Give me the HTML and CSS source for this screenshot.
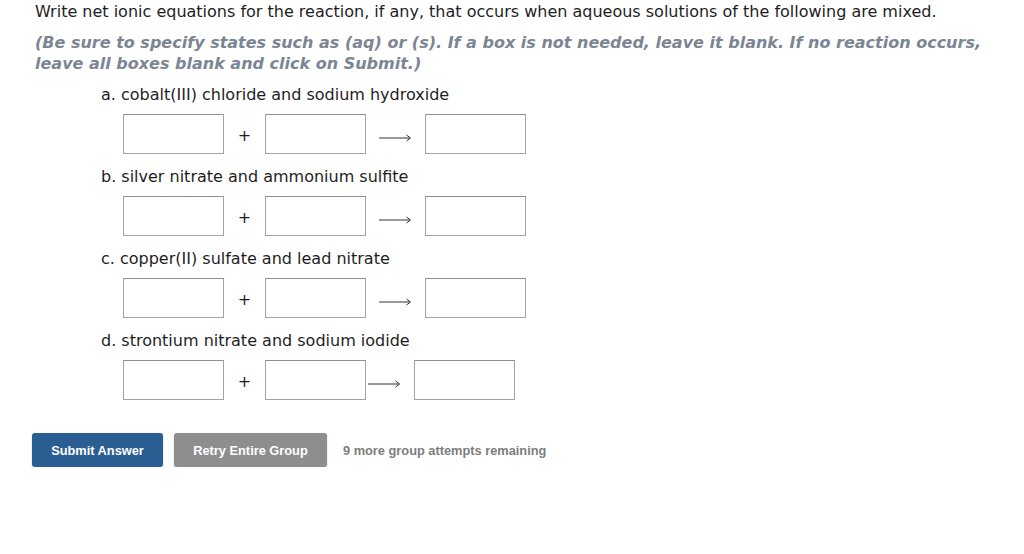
FILE: index.html
```html
<!DOCTYPE html>
<html>
<head>
<meta charset="utf-8">
<link rel="stylesheet" href="styles.css">
</head>
<body>
<div class="page">
  <p class="prompt">Write net ionic equations for the reaction, if any, that occurs when aqueous solutions of the following are mixed.</p>
  <p class="note">(Be sure to specify states such as (aq) or (s). If a box is not needed, leave it blank. If no reaction occurs, leave all boxes blank and click on Submit.)</p>

  <div class="question">
    <div class="label">a. cobalt(III) chloride and sodium hydroxide</div>
    <div class="eq">
      <span class="box"></span>
      <span class="plus">+</span>
      <span class="box"></span>
      <span class="arrow"><svg width="33" height="8" viewBox="0 0 33 8"><line x1="0" y1="4" x2="31" y2="4" stroke="#333" stroke-width="1"/><polyline points="27.5,1 31.5,4 27.5,7" fill="none" stroke="#333" stroke-width="1"/></svg></span>
      <span class="box"></span>
    </div>
  </div>

  <div class="question">
    <div class="label">b. silver nitrate and ammonium sulfite</div>
    <div class="eq">
      <span class="box"></span>
      <span class="plus">+</span>
      <span class="box"></span>
      <span class="arrow"><svg width="33" height="8" viewBox="0 0 33 8"><line x1="0" y1="4" x2="31" y2="4" stroke="#333" stroke-width="1"/><polyline points="27.5,1 31.5,4 27.5,7" fill="none" stroke="#333" stroke-width="1"/></svg></span>
      <span class="box"></span>
    </div>
  </div>

  <div class="question">
    <div class="label">c. copper(II) sulfate and lead nitrate</div>
    <div class="eq">
      <span class="box"></span>
      <span class="plus">+</span>
      <span class="box"></span>
      <span class="arrow"><svg width="33" height="8" viewBox="0 0 33 8"><line x1="0" y1="4" x2="31" y2="4" stroke="#333" stroke-width="1"/><polyline points="27.5,1 31.5,4 27.5,7" fill="none" stroke="#333" stroke-width="1"/></svg></span>
      <span class="box"></span>
    </div>
  </div>

  <div class="question">
    <div class="label">d. strontium nitrate and sodium iodide</div>
    <div class="eq">
      <span class="box"></span>
      <span class="plus">+</span>
      <span class="box"></span>
      <span class="arrow tight"><svg width="33" height="8" viewBox="0 0 33 8"><line x1="0" y1="4" x2="31" y2="4" stroke="#333" stroke-width="1"/><polyline points="27.5,1 31.5,4 27.5,7" fill="none" stroke="#333" stroke-width="1"/></svg></span>
      <span class="box"></span>
    </div>
  </div>

  <div class="actions">
    <button class="btn btn-submit">Submit Answer</button>
    <button class="btn btn-retry">Retry Entire Group</button>
    <span class="remaining">9 more group attempts remaining</span>
  </div>
</div>
</body>
</html>
```

FILE: styles.css
```css
html, body {
  margin: 0;
  padding: 0;
  background: #ffffff;
}

.page {
  padding: 1px 0 0 35px;
  font-family: "DejaVu Sans", Verdana, sans-serif;
  font-size: 16px;
  line-height: 21px;
  color: #1e1e1e;
}

.prompt {
  margin: 0;
}

.note {
  margin: 10px 0 0 0;
  width: 950px;
  font-weight: bold;
  font-style: italic;
  color: #7b8594;
}

.question {
  margin: 10px 0 0 66px;
}

.question + .question {
  margin-top: 12px;
}

.label {
  height: 21px;
}

.eq {
  display: flex;
  align-items: center;
  margin: 9px 0 0 22px;
  height: 40px;
}

.box {
  display: block;
  box-sizing: border-box;
  width: 101px;
  height: 40px;
  border: 1px solid #a3a3a3;
  border-top-color: #8f8f8f;
  background: #fff;
}

.plus {
  width: 41px;
  text-align: center;
  font-size: 16px;
  padding-top: 2px;
}

.arrow {
  width: 59px;
  display: flex;
  justify-content: flex-start;
  padding-left: 13px;
  box-sizing: border-box;
  padding-top: 7px;
}

.arrow.tight {
  width: 48px;
  padding-left: 2px;
}

.actions {
  display: flex;
  align-items: center;
  margin: 33px 0 0 -3px;
}

.btn {
  font-family: "Liberation Sans", Arial, sans-serif;
  font-weight: bold;
  font-size: 12.8px;
  color: #ffffff;
  border: none;
  border-radius: 3px;
  height: 34px;
  padding: 0;
  box-shadow: 0 1px 2px rgba(0,0,0,0.2);
}

.btn-submit {
  width: 131px;
  background: #2a5e93;
}

.btn-retry {
  width: 153px;
  margin-left: 11px;
  background: #8e8e8e;
}

.remaining {
  margin-left: 16px;
  font-family: "Liberation Sans", Arial, sans-serif;
  font-weight: bold;
  font-size: 12.8px;
  color: #7d7d7d;
}
```
